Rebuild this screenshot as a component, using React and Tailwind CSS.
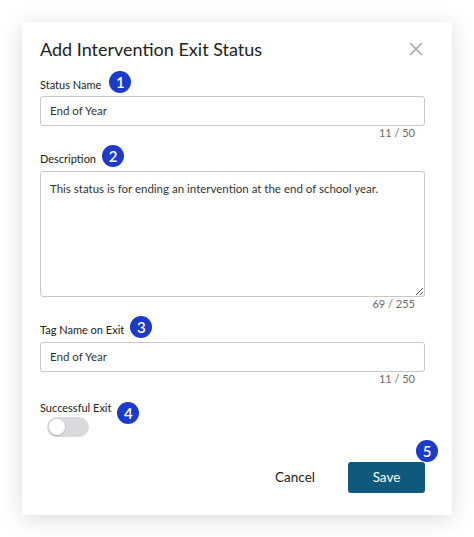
import React from 'react';

const Badge = ({ n, className = '' }) => (
  <span className={`flex w-[22px] h-[22px] items-center justify-center rounded-full bg-[#1b3bc8] text-white text-[15px] font-semibold leading-none ${className}`}>
    {n}
  </span>
);

const Counter = ({ text }) => (
  <div className="h-[14px] pr-[10px] text-right text-[11px] leading-[14px] text-[#6b6b6b]">{text}</div>
);

export default function App() {
  return (
    <div className="w-[474px] h-[537px] bg-white pt-[22px] pl-[22px] font-['Lato',sans-serif]">
      <div className="w-[430px] h-[493px] bg-white shadow-[0_4px_22px_rgba(0,0,0,0.14)] pl-[18px] pr-[27px] pt-[16px]">
        <div className="flex h-[22px] items-center justify-between">
          <h2 className="text-[18px] leading-[22px] text-[#222]">Add Intervention Exit Status</h2>
          <svg className="mr-[2px]" width="14" height="14" viewBox="0 0 14 14" fill="none" stroke="#a3a6ab" strokeWidth="1.6">
            <path d="M1 1l12 12M13 1L1 13" />
          </svg>
        </div>

        <div className="mt-[11px] flex items-center gap-[8px]">
          <span className="mt-[6px] text-[11px] leading-[14px] text-[#222]">Status Name</span>
          <Badge n="1" />
        </div>
        <div className="mt-[3px] flex h-[30px] items-center rounded-[3px] border border-[#c9c9c9] pl-[9px] text-[11.5px] text-[#333]">
          End of Year
        </div>
        <Counter text="11 / 50" />

        <div className="mt-[5px] flex items-center gap-[6px]">
          <span className="mt-[6px] text-[11px] leading-[14px] text-[#222]">Description</span>
          <Badge n="2" />
        </div>
        <div className="relative mt-[4px] h-[126px] rounded-[3px] border border-[#c9c9c9] px-[9px] pt-[9px] text-[11.5px] leading-[16px] text-[#333]">
          This status is for ending an intervention at the end of school year.
          <svg className="absolute right-0 bottom-0" width="10" height="10" viewBox="0 0 10 10" stroke="#555" strokeWidth="1">
            <path d="M9 2L2 9M9 6L6 9" />
          </svg>
        </div>
        <Counter text="69 / 255" />

        <div className="mt-[5px] flex items-center gap-[6px]">
          <span className="mt-[6px] text-[11px] leading-[14px] text-[#222]">Tag Name on Exit</span>
          <Badge n="3" />
        </div>
        <div className="mt-[4px] flex h-[30px] items-center rounded-[3px] border border-[#c9c9c9] pl-[9px] text-[11.5px] text-[#333]">
          End of Year
        </div>
        <Counter text="11 / 50" />

        <div className="mt-[16px] flex items-start gap-[6px]">
          <span className="mt-[-1px] text-[11px] leading-[14px] text-[#222]">Successful Exit</span>
          <Badge n="4" />
        </div>
        <div className="ml-[7px] mt-[-7px] flex h-[20px] w-[42px] items-center rounded-full bg-[#d9dadd] px-[2px]">
          <span className="h-[16px] w-[16px] rounded-full bg-white shadow-[0_1px_2px_rgba(0,0,0,0.2)]" />
        </div>

        <div className="mt-[25px] flex items-center justify-end gap-[33px]">
          <button className="text-[13.5px] text-[#222]">Cancel</button>
          <button className="relative h-[31px] w-[77px] rounded-[3px] bg-[#0f5a7c] text-[13.5px] text-white">
            Save
            <Badge n="5" className="absolute -top-[22px] -right-[13px]" />
          </button>
        </div>
      </div>
    </div>
  );
}
